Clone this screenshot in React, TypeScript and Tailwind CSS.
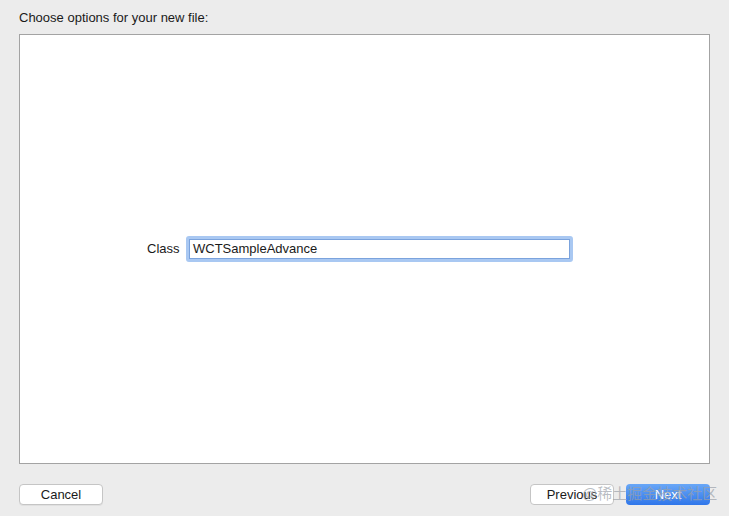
export default function App() {
  return (
    <div
      className="relative flex h-[516px] w-[729px] flex-col bg-[#ececec] text-[13px] text-[#1a1a1a]"
      style={{ fontFamily: '"Liberation Sans", Arial, sans-serif' }}
    >
      <div className="px-[19px] pt-[10px] leading-[16px]">Choose options for your new file:</div>

      <div className="mx-[19px] mt-[8px] flex h-[430px] items-center justify-center border border-[#a3a3a3] bg-white">
        <div className="flex w-full items-center pl-[127px]">
          <label className="w-[32px] text-right leading-[16px]">Class</label>
          <div className="ml-[7px] flex h-[26px] w-[387px] items-center rounded-[3px] border-[3px] border-[#a9c8f2] bg-white">
            <div className="flex h-full w-full items-center border border-[#7ba3dd] px-[3px] leading-[16px]">
              WCTSampleAdvance
            </div>
          </div>
        </div>
      </div>

      <div className="mt-[20px] flex items-center px-[19px]">
        <button className="h-[21px] w-[84px] rounded-[4px] border border-[#c5c5c5] bg-white leading-[16px] shadow-[0_1px_0_rgba(0,0,0,0.05)]">
          Cancel
        </button>
        <div className="flex-1" />
        <button className="h-[21px] w-[84px] rounded-[4px] border border-[#c5c5c5] bg-white leading-[16px]">
          Previous
        </button>
        <button className="ml-[12px] h-[21px] w-[84px] rounded-[4px] bg-gradient-to-b from-[#69a7f7] to-[#2f76ea] leading-[16px] text-white">
          Next
        </button>
      </div>

      {/* watermark over the buttons */}
      <div
        className="pointer-events-none absolute left-[582px] top-[484px] whitespace-nowrap text-[15px] leading-[20px] text-[#9aa0a8]/70"
        style={{ fontFamily: '"Liberation Sans", "Noto Sans CJK SC", sans-serif' }}
      >
        @稀土掘金技术社区
      </div>
    </div>
  )
}
